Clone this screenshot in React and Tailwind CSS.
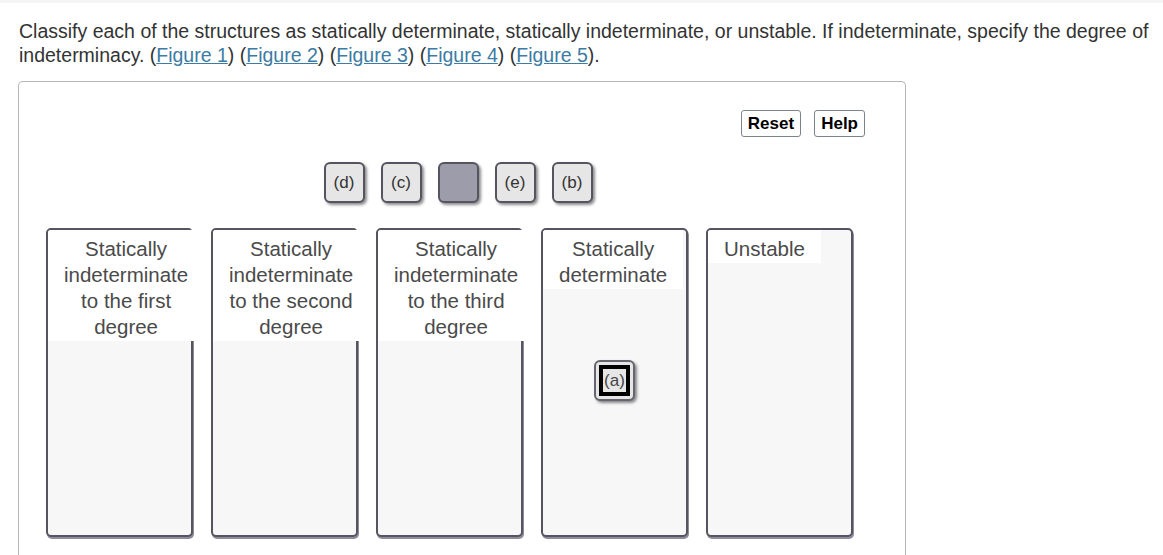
import React from "react";

const bins = [
  { label: ["Statically", "indeterminate", "to the first", "degree"], items: [] },
  { label: ["Statically", "indeterminate", "to the second", "degree"], items: [] },
  { label: ["Statically", "indeterminate", "to the third", "degree"], items: [] },
  { label: ["Statically", "determinate"], items: ["(a)"] },
  { label: ["Unstable"], items: [] },
];

const tokens = ["(d)", "(c)", null, "(e)", "(b)"];

function Token({ text }) {
  if (!text) {
    return (
      <div className="w-[41px] h-[41px] rounded-[6px] border-2 border-[#55545f] bg-[#9d9cab] shadow-[2px_2px_3px_rgba(0,0,0,0.45)]" />
    );
  }
  return (
    <div className="w-[41px] h-[41px] rounded-[6px] border-2 border-[#55545f] bg-[#e6e6e6] shadow-[2px_2px_3px_rgba(0,0,0,0.45)] flex items-center justify-center text-[17px] text-[#333]">
      {text}
    </div>
  );
}

function Figure({ n }) {
  return (
    <span>
      (<a href="#" className="text-[#3c7ba3] underline">Figure {n}</a>)
    </span>
  );
}

export default function App() {
  return (
    <div className="min-h-[555px] bg-white text-[#333]" style={{ fontFamily: '"Liberation Sans", Arial, sans-serif' }}>
      <div className="h-[3px] bg-[#f4f4f4]" />
      <div className="pl-[19px] pr-[8px] pt-[16px]">
        <p className="text-[19.5px] leading-[24px]">
          Classify each of the structures as statically determinate, statically indeterminate, or unstable. If indeterminate, specify the degree of indeterminacy. <Figure n={1} /> <Figure n={2} /> <Figure n={3} /> <Figure n={4} /> <Figure n={5} />.
        </p>
      </div>

      <div className="ml-[18px] mt-[14px] w-[888px] h-[480px] border border-[#b5b5b5] rounded-[5px] border-b-0 rounded-b-none">
        <div className="flex justify-end gap-[13px] pr-[40px] pt-[28px]">
          <button className="h-[27px] px-[6px] border border-[#7d8489] rounded-[3px] bg-white text-[17px] font-bold text-black">Reset</button>
          <button className="h-[27px] px-[6px] border border-[#7d8489] rounded-[3px] bg-white text-[17px] font-bold text-black">Help</button>
        </div>

        <div className="flex justify-center gap-[16px] mt-[25px] pr-[8px]">
          {tokens.map((t, i) => (
            <Token key={i} text={t} />
          ))}
        </div>

        <div className="flex gap-[18px] pl-[27px] mt-[25px]">
          {bins.map((b, i) => (
            <div
              key={i}
              className="w-[147px] h-[309px] border-2 border-[#55545f] rounded-[5px] bg-[#f7f7f7] shadow-[1px_2px_0_#8e8c9c]"
            >
              <div className="inline-block px-[16px] pt-[6px] pb-[1px] bg-white text-center text-[20.5px] leading-[26px] text-[#4a4a4a] whitespace-nowrap rounded-tl-[3px]">
                {b.label.map((l, j) => (
                  <div key={j}>{l}</div>
                ))}
              </div>
              {b.items.map((it, k) => (
                <div key={k} className="flex justify-center mt-[71px]">
                  <div className="w-[41px] h-[41px] rounded-[6px] border-2 border-[#66656f] bg-[#e6e6e6] shadow-[2px_2px_3px_rgba(0,0,0,0.45)] p-[3px]">
                    <div className="w-full h-full border-[4px] border-black bg-[#e6e6e6] flex items-center justify-center text-[17px] text-[#444]">
                      {it}
                    </div>
                  </div>
                </div>
              ))}
            </div>
          ))}
        </div>
      </div>
    </div>
  );
}
